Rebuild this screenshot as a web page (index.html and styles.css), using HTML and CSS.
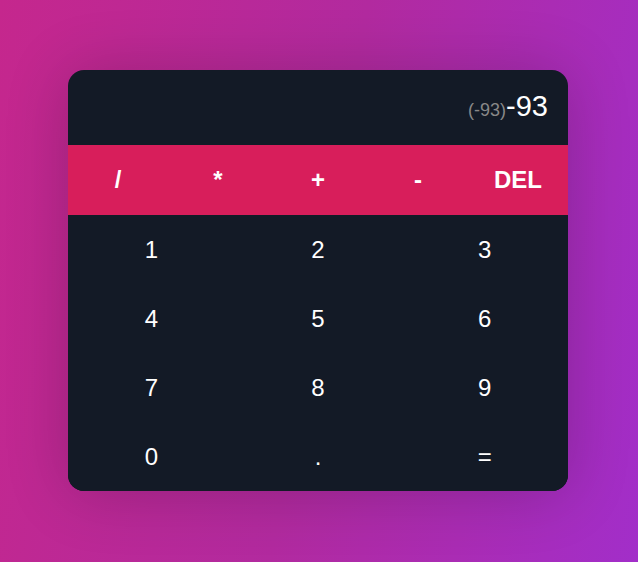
FILE: index.html
```html
<!DOCTYPE html>
<html>
<head>
<meta charset="utf-8">
<link rel="stylesheet" href="styles.css">
</head>
<body>
<div class="app">
  <div class="calculator">
    <div class="display"><span class="preview">(-93)</span>-93</div>
    <div class="operators">
      <button class="op">/</button>
      <button class="op">*</button>
      <button class="op">+</button>
      <button class="op">-</button>
      <button class="op">DEL</button>
    </div>
    <div class="digits">
      <button class="digit">1</button>
      <button class="digit">2</button>
      <button class="digit">3</button>
      <button class="digit">4</button>
      <button class="digit">5</button>
      <button class="digit">6</button>
      <button class="digit">7</button>
      <button class="digit">8</button>
      <button class="digit">9</button>
      <button class="digit">0</button>
      <button class="digit">.</button>
      <button class="digit">=</button>
    </div>
  </div>
</div>
</body>
</html>
```
FILE: styles.css
```css
* { box-sizing: border-box; }
html, body { margin: 0; padding: 0; }
body {
  font-family: "Liberation Sans", Arial, sans-serif;
  background-image: linear-gradient(100deg, #c5278d 0%, #b22a9f 50%, #a22ec9 100%);
  min-height: 100vh;
}
.app {
  display: flex;
  min-height: 100vh;
  align-items: center;
  justify-content: center;
  padding-right: 2px;
  padding-bottom: 1px;
}
.calculator {
  width: 500px;
  border-radius: 16px;
  overflow: hidden;
  background-color: #131a26;
  box-shadow: 0 2px 64px rgba(0, 0, 0, 0.2);
}
.display {
  height: 75px;
  padding: 20px 20px 0 20px;
  text-align: right;
  color: #fff;
  font-size: 29px;
  line-height: 33px;
}
.preview {
  font-size: 18px;
  color: #888;
}
.operators {
  display: flex;
}
button {
  appearance: none;
  border: none;
  outline: none;
  color: #fff;
  font-family: "Liberation Sans", Arial, sans-serif;
  padding: 0;
  margin: 0;
}
.op {
  flex: 1 1 0%;
  height: 70px;
  background-color: #d81e5b;
  font-size: 24px;
  font-weight: 700;
}
.digits {
  display: flex;
  flex-wrap: wrap;
}
.digit {
  flex: 1 1 33.333%;
  max-width: 33.333%;
  height: 69px;
  background-color: #131a26;
  font-size: 24px;
}
```
